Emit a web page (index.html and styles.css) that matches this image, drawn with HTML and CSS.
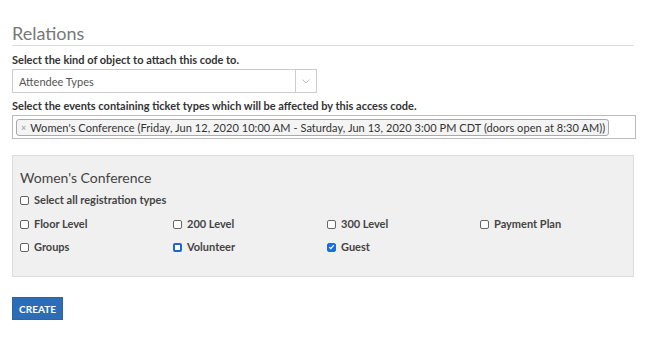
FILE: index.html
```html
<!DOCTYPE html>
<html>
<head>
<meta charset="utf-8">
<link rel="stylesheet" href="styles.css">
</head>
<body>
<div class="page">
  <h2 class="section-title">Relations</h2>
  <div class="field">
    <label class="field-label">Select the kind of object to attach this code to.</label>
    <div class="select">
      <span class="select-value">Attendee Types</span>
      <span class="select-arrow">
        <svg width="8" height="5" viewBox="0 0 8 5"><path d="M0.5 0.5 L4 4 L7.5 0.5" fill="none" stroke="#aaa" stroke-width="0.8"/></svg>
      </span>
    </div>
  </div>
  <div class="field second">
    <label class="field-label">Select the events containing ticket types which will be affected by this access code.</label>
    <div class="multi">
      <span class="tag"><span class="tag-x">×</span>Women's Conference (Friday, Jun 12, 2020 10:00 AM - Saturday, Jun 13, 2020 3:00 PM CDT (doors open at 8:30 AM))</span>
    </div>
  </div>
  <div class="panel">
    <h3 class="panel-title">Women's Conference</h3>
    <label class="check all"><span class="box"></span>Select all registration types</label>
    <div class="grid">
      <label class="check"><span class="box"></span>Floor Level</label>
      <label class="check"><span class="box"></span>200 Level</label>
      <label class="check"><span class="box"></span>300 Level</label>
      <label class="check"><span class="box"></span>Payment Plan</label>
      <label class="check"><span class="box"></span>Groups</label>
      <label class="check"><span class="box focus"></span>Volunteer</label>
      <label class="check"><span class="box checked"><svg width="8" height="8" viewBox="0 0 8 8"><path d="M1.5 4.2 L3.2 5.9 L6.6 1.8" fill="none" stroke="#fff" stroke-width="1.4"/></svg></span>Guest</label>
    </div>
  </div>
  <button class="btn">CREATE</button>
</div>
</body>
</html>
```
FILE: styles.css
```css
html, body { margin: 0; padding: 0; background: #fff; }
body { font-family: Lato, "Open Sans", sans-serif; color: #333; }
.page { padding: 22px 11px 0 12px; width: 622px; }
.section-title {
  margin: 0; font-size: 18px; font-weight: 400; color: #777;
  line-height: 22px; padding-bottom: 1px; border-bottom: 1px solid #ddd;
}
.field { margin-top: 7px; }
.field.second { margin-top: 6px; }
.field-label { display: block; font-size: 11px; font-weight: 700; color: #333; line-height: 14px; margin-bottom: 2px; }
.select {
  width: 303px; height: 22px; border: 1px solid #ccc; background: #fff;
  display: flex; align-items: center; box-sizing: content-box;
}
.select-value { flex: 1; font-size: 11px; color: #555; padding-left: 6px; }
.select-arrow {
  width: 20px; height: 22px; border-left: 1px solid #ccc;
  display: flex; align-items: center; justify-content: center;
}
.multi {
  width: 619px; height: 22px; border: 1px solid #bbb; background: #fff;
  display: flex; align-items: center; padding-left: 3px; box-sizing: content-box;
}
.tag {
  font-size: 11px; color: #333; border: 1px solid #aaa; border-radius: 3px;
  background: #f4f4f4; height: 15px; line-height: 15px; padding: 0 3px 0 4px;
  white-space: nowrap; display: flex; align-items: center; letter-spacing: 0.005em;
}
.tag-x { color: #aaa; font-weight: 700; font-size: 9px; margin-right: 4px; }
.panel {
  margin-top: 16px; background: #f0f0f0; border: 1px solid #ddd;
  height: 122px; padding: 13px 7px 0 7px; box-sizing: border-box;
}
.panel-title { margin: 0; font-size: 14px; font-weight: 400; color: #444; line-height: 18px; }
.check { display: flex; align-items: center; font-size: 11px; font-weight: 700; color: #444; line-height: 14px; }
.check.all { margin-top: 6px; }
.box {
  width: 7px; height: 7px; border: 1px solid #666; border-radius: 2px; background: #fff;
  margin-right: 5px; display: inline-flex; align-items: center; justify-content: center;
}
.box.focus { border: 2px solid #1a66d4; width: 5px; height: 5px; }
.box.checked { background: #1a6fe0; border-color: #1a6fe0; }
.grid { display: grid; grid-template-columns: 153px 154px 153px 153px; row-gap: 9px; margin-top: 10px; }
.btn {
  margin-top: 20px; background: #2c6db6; color: #fff; border: 1px solid #2a65a8;
  font-family: Lato, sans-serif; font-weight: 700; font-size: 10px;
  width: 51px; height: 23px; padding: 0; cursor: pointer;
}
```
